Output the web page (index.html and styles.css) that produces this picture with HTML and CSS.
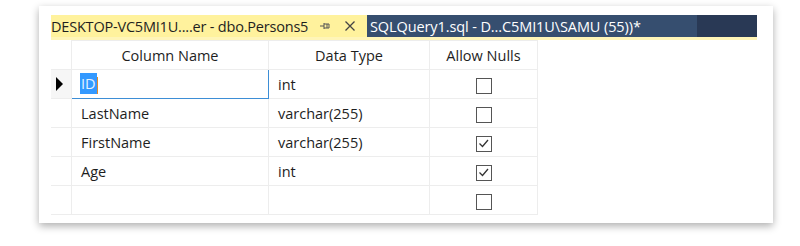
FILE: index.html
```html
<!DOCTYPE html>
<html>
<head>
<meta charset="utf-8">
<link rel="stylesheet" href="styles.css">
</head>
<body>
<div class="card">
  <div class="tabs">
    <div class="tab tab-active">
      <span class="tab-title">DESKTOP-VC5MI1U....er - dbo.Persons5</span>
      <svg class="pin" width="12" height="10" viewBox="0 0 12 10"><path d="M1 5H5M5 2V8M5 3H10V7H5M8 3V7" fill="none" stroke="#555" stroke-width="1"/></svg>
      <svg class="close" width="12" height="12" viewBox="0 0 12 12"><path d="M1.5 1.5L10.5 10.5M10.5 1.5L1.5 10.5" stroke="#444" stroke-width="1.3"/></svg>
    </div>
    <div class="tab tab-inactive">SQLQuery1.sql - D...C5MI1U\SAMU (55))*</div>
    <div class="tab-rest"></div>
  </div>
  <div class="tabline"></div>
  <table class="grid">
    <thead>
      <tr>
        <th class="rh"></th>
        <th class="c-name">Column Name</th>
        <th class="c-type">Data Type</th>
        <th class="c-null">Allow Nulls</th>
      </tr>
    </thead>
    <tbody>
      <tr>
        <td class="rh cur"><span class="arrow"></span></td>
        <td class="sel"><span class="hl">ID</span><span class="caret"></span></td>
        <td>int</td>
        <td class="chk"><span class="box"></span></td>
      </tr>
      <tr>
        <td class="rh"></td>
        <td>LastName</td>
        <td>varchar(255)</td>
        <td class="chk"><span class="box"></span></td>
      </tr>
      <tr>
        <td class="rh"></td>
        <td>FirstName</td>
        <td>varchar(255)</td>
        <td class="chk"><span class="box"><svg width="13" height="13" viewBox="0 0 13 13"><path d="M2.5 6.5L5.5 9.5L11 3" fill="none" stroke="#333" stroke-width="1.3"/></svg></span></td>
      </tr>
      <tr>
        <td class="rh"></td>
        <td>Age</td>
        <td>int</td>
        <td class="chk"><span class="box"><svg width="13" height="13" viewBox="0 0 13 13"><path d="M2.5 6.5L5.5 9.5L11 3" fill="none" stroke="#333" stroke-width="1.3"/></svg></span></td>
      </tr>
      <tr>
        <td class="rh"></td>
        <td></td>
        <td></td>
        <td class="chk"><span class="box"></span></td>
      </tr>
    </tbody>
  </table>
</div>
</body>
</html>
```

FILE: styles.css
```css
html, body {
  margin: 0;
  padding: 0;
  background: #ffffff;
}
body {
  font-family: "Open Sans", "Noto Sans", sans-serif;
  font-size: 14.5px;
  color: #1e1e1e;
  min-height: 246px;
  padding-top: 6px;
  box-sizing: border-box;
}
.card {
  margin: 0 0 0 39px;
  width: 722px;
  height: 208px;
  padding: 9px 0 0 12px;
  background: #ffffff;
  box-shadow: 0 3px 8px rgba(0, 0, 0, 0.32);
}
.tabs {
  display: flex;
  width: 706px;
  height: 22px;
  background: #293955;
}
.tab {
  display: flex;
  align-items: center;
  height: 22px;
  white-space: nowrap;
  overflow: hidden;
}
.tab-active {
  width: 316px;
  background: #fff29d;
  color: #1e1e1e;
}
.tab-title {
  letter-spacing: -0.2px;
}
.pin {
  margin-left: 11px;
}
.close {
  margin-left: 13px;
}
.tab-inactive {
  width: 327px;
  padding-left: 3px;
  background: #364e6f;
  color: #ffffff;
  letter-spacing: -0.1px;
}
.tab-rest {
  flex: 1;
}
.tabline {
  width: 706px;
  height: 3px;
  background: #fff5b8;
}
.grid {
  border-collapse: collapse;
  table-layout: fixed;
}
.grid th, .grid td {
  border: 1px solid #ededed;
  height: 28px;
  padding: 0;
  font-weight: normal;
  white-space: nowrap;
}
.grid th {
  text-align: center;
}
.grid td {
  padding-left: 9px;
}
.rh {
  width: 20px;
}
.grid td.rh {
  padding: 0;
}
.grid thead .rh {
  border-left: none;
  border-top: none;
}
.grid tr td.rh {
  border-left: none;
}
.c-name {
  width: 196px;
}
.c-type {
  width: 160px;
}
.c-null {
  width: 107px;
}
.cur {
  background: #f6f6f6;
}
.arrow {
  display: block;
  width: 0;
  height: 0;
  margin-left: 5px;
  border-top: 7px solid transparent;
  border-bottom: 7px solid transparent;
  border-left: 7px solid #000000;
}
.grid td.sel {
  border: 1px solid #3d8ed6;
  padding-left: 8px;
}
.hl {
  background: #3399ff;
  color: #e6f2ff;
  padding: 1px 1px;
}
.caret {
  display: inline-block;
  width: 1px;
  height: 17px;
  vertical-align: middle;
  background: #e08a2c;
}
.grid td.chk {
  padding: 0;
  text-align: center;
}
.box {
  display: inline-flex;
  align-items: center;
  justify-content: center;
  width: 14px;
  height: 14px;
  border: 1.5px solid #555555;
  vertical-align: middle;
}
.box svg {
  display: block;
}
```
